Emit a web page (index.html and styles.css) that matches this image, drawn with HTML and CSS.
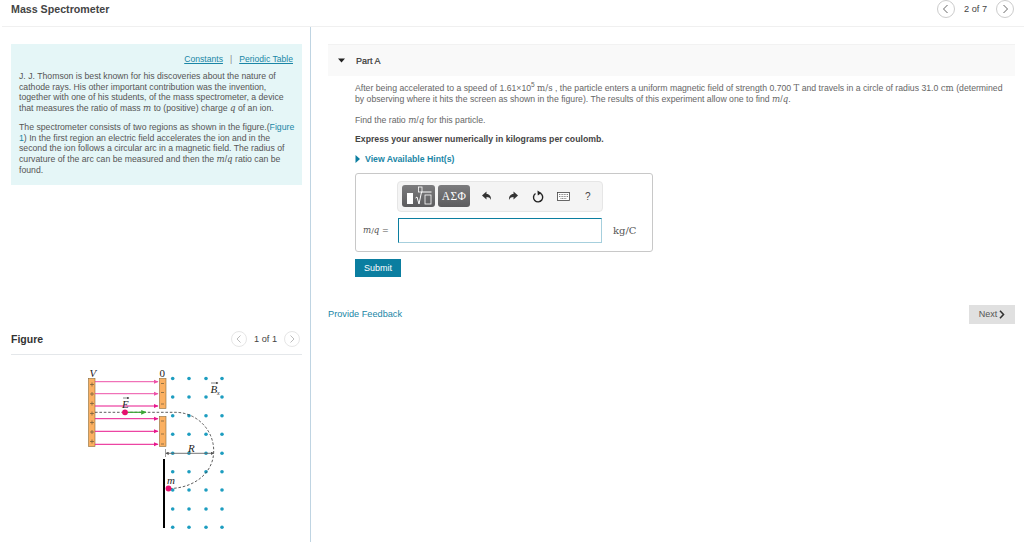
FILE: index.html
```html
<!DOCTYPE html>
<html lang="en">
<head>
<meta charset="utf-8">
<title>Mass Spectrometer</title>
<link rel="stylesheet" href="styles.css">
</head>
<body>
<header class="top">
  <h1 class="title">Mass Spectrometer</h1>
  <div class="pager">
    <span class="circle"><svg width="18" height="18" viewBox="0 0 18 18"><path d="M10.5 5 L6.5 9 L10.5 13" class="chev"/></svg></span>
    <span class="pager-text">2 of 7</span>
    <span class="circle"><svg width="18" height="18" viewBox="0 0 18 18"><path d="M7.5 5 L11.5 9 L7.5 13" class="chev"/></svg></span>
  </div>
</header>
<main class="main">
  <section class="left">
    <div class="intro">
      <div class="links"><a>Constants</a><span class="sep">|</span><a>Periodic Table</a></div>
      <p class="para">J. J. Thomson is best known for his discoveries about the nature of cathode rays. His other important contribution was the invention, together with one of his students, of the mass spectrometer, a device that measures the ratio of mass <i class="m">m</i> to (positive) charge <i class="m">q</i> of an ion.</p>
      <p class="para para2">The spectrometer consists of two regions as shown in the figure.(<span class="fig">Figure 1</span>) In the first region an electric field accelerates the ion and in the second the ion follows a circular arc in a magnetic field. The radius of curvature of the arc can be measured and then the <i class="m">m</i>/<i class="m">q</i> ratio can be found.</p>
    </div>
    <div class="fighead">
      <h2 class="figtitle">Figure</h2>
      <div class="pager small">
        <span class="circle faint"><svg width="16" height="16" viewBox="0 0 16 16"><path d="M9.5 4.5 L6 8 L9.5 11.5" class="chev pale"/></svg></span>
        <span class="pager-text">1 of 1</span>
        <span class="circle faint"><svg width="16" height="16" viewBox="0 0 16 16"><path d="M6.5 4.5 L10 8 L6.5 11.5" class="chev pale"/></svg></span>
      </div>
    </div>
    <svg class="diagram" width="180" height="182" viewBox="0 0 180 182">
      <defs>
        <marker id="ah" markerWidth="5" markerHeight="5" refX="4" refY="2.5" orient="auto"><path d="M0 .5 L4.5 2.5 L0 4.5z" fill="#e8178c"/></marker>
        <marker id="ag" markerWidth="5" markerHeight="5" refX="4" refY="2.5" orient="auto"><path d="M0 .5 L4.5 2.5 L0 4.5z" fill="#3aa535"/></marker>
        <marker id="ak" markerWidth="4" markerHeight="4" refX="3" refY="2" orient="auto-start-reverse"><path d="M0 0 L3.5 2 L0 4z" fill="#555"/></marker>
        <marker id="as" markerWidth="4" markerHeight="4" refX="3" refY="2" orient="auto"><path d="M0 0 L3.5 2 L0 4z" fill="#333"/></marker>
      </defs>
      <g fill="#fbb061" stroke="#8a6d3b" stroke-width=".6">
        <rect x="28.500" y="18.500" width="6.500" height="68"/>
        <rect x="99.500" y="18.500" width="6.500" height="30"/>
        <rect x="99.500" y="56.500" width="6.500" height="30"/>
      </g>
      <g stroke="#e8178c" stroke-width="1">
        <line x1="35" y1="21.700" x2="98" y2="21.700" opacity=".75" marker-end="url(#ah)"/>
        <line x1="35" y1="33.700" x2="98" y2="33.700" opacity=".75" marker-end="url(#ah)"/>
        <line x1="35" y1="46" x2="98" y2="46" marker-end="url(#ah)"/>
        <line x1="35" y1="58.700" x2="98" y2="58.700" marker-end="url(#ah)"/>
        <line x1="35" y1="71.300" x2="98" y2="71.300" marker-end="url(#ah)"/>
        <line x1="35" y1="84.300" x2="98" y2="84.300" marker-end="url(#ah)"/>
      </g>
      <g stroke="#6b5a3a" stroke-width=".7">
        <path d="M30 24.500h4M32 22.500v4M30 34h4M32 32v4M30 43.500h4M32 41.500v4M30 53.500h4M32 51.500v4M30 62.500h4M32 60.500v4M30 72h4M32 70v4M30 81.500h4M32 79.500v4"/>
        <path d="M101 23.500h3M101 32.500h3M101 44h3M101 61h3M101 74h3M101 84h3"/>
      </g>
      <g fill="#1d9dc0">
        <circle cx="112.700" cy="18.500" r="1.800"/><circle cx="129" cy="18.500" r="1.800"/><circle cx="146" cy="18.500" r="1.800"/><circle cx="162" cy="18.500" r="1.800"/>
        <circle cx="112.700" cy="37" r="1.800"/><circle cx="129" cy="37" r="1.800"/><circle cx="146" cy="37" r="1.800"/><circle cx="162" cy="37" r="1.800"/>
        <circle cx="112.700" cy="55.700" r="1.800"/><circle cx="129" cy="55.700" r="1.800"/><circle cx="146" cy="55.700" r="1.800"/><circle cx="162" cy="55.700" r="1.800"/>
        <circle cx="112.700" cy="74.300" r="1.800"/><circle cx="129" cy="74.300" r="1.800"/><circle cx="146" cy="74.300" r="1.800"/><circle cx="162" cy="74.300" r="1.800"/>
        <circle cx="112.700" cy="93.300" r="1.800"/><circle cx="129" cy="93.300" r="1.800"/><circle cx="146" cy="93.300" r="1.800"/><circle cx="162" cy="93.300" r="1.800"/>
        <circle cx="112.700" cy="111.700" r="1.800"/><circle cx="129" cy="111.700" r="1.800"/><circle cx="146" cy="111.700" r="1.800"/><circle cx="162" cy="111.700" r="1.800"/>
        <circle cx="112.700" cy="130" r="1.800"/><circle cx="129" cy="130" r="1.800"/><circle cx="146" cy="130" r="1.800"/><circle cx="162" cy="130" r="1.800"/>
        <circle cx="112.700" cy="149" r="1.800"/><circle cx="129" cy="149" r="1.800"/><circle cx="146" cy="149" r="1.800"/><circle cx="162" cy="149" r="1.800"/>
        <circle cx="112.700" cy="167.300" r="1.800"/><circle cx="129" cy="167.300" r="1.800"/><circle cx="146" cy="167.300" r="1.800"/><circle cx="162" cy="167.300" r="1.800"/>
      </g>
      <path d="M35 52.300 H115 A38.500 38.500 0 0 1 153.700 91 C153.700 113 134 128 110 128.500" fill="none" stroke="#333" stroke-width=".8" stroke-dasharray="2.600 1.800"/>
      <line x1="68" y1="52.300" x2="86" y2="52.300" stroke="#3aa535" stroke-width="1.200" marker-end="url(#ag)"/>
      <circle cx="65" cy="52.300" r="2.900" fill="#e5116f"/>
      <rect x="103" y="99" width="2" height="69" fill="#000"/>
      <circle cx="108.500" cy="128.500" r="2.900" fill="#e5116f"/>
      <path d="M105.500 89v8" stroke="#777" stroke-width=".7"/>
      <line x1="106" y1="93.300" x2="153.500" y2="93.300" stroke="#666" stroke-width=".9" marker-end="url(#ak)" marker-start="url(#ak)"/>
      <g class="dtext">
        <text x="29.500" y="17">V</text>
        <text x="99.500" y="17" class="up">0</text>
        <text x="62" y="48">E</text>
        <text x="150.500" y="33">B</text>
        <text x="157" y="35" class="sub">x</text>
        <text x="128" y="91.500">R</text>
        <text x="107" y="124">m</text>
      </g>
      <line x1="63" y1="38" x2="69" y2="38" stroke="#333" stroke-width=".6" marker-end="url(#as)"/>
      <line x1="151" y1="23" x2="158" y2="23" stroke="#333" stroke-width=".6" marker-end="url(#as)"/>
    </svg>
  </section>
  <section class="right">
    <div class="part"><svg class="tri" width="8" height="5" viewBox="0 0 8 5"><path d="M0 0.500H7L3.500 4.500z" fill="#222"/></svg><span>Part A</span></div>
    <div class="body">
      <p class="q q1">After being accelerated to a speed of 1.61&#215;10<sup>5</sup> <span class="u">m/s</span> , the particle enters a uniform magnetic field of strength 0.700 <span class="u">T</span> and travels in a circle of radius 31.0 <span class="u">cm</span> (determined by observing where it hits the screen as shown in the figure). The results of this experiment allow one to find <i class="m">m</i>/<i class="m">q</i>.</p>
      <p class="q q2">Find the ratio <i class="m">m</i>/<i class="m">q</i> for this particle.</p>
      <p class="q bold">Express your answer numerically in kilograms per coulomb.</p>
      <div class="hint"><svg width="6" height="8" viewBox="0 0 6 8"><path d="M0.500 0V8L5 4z" fill="#0b7ea0"/></svg><span>View Available Hint(s)</span></div>
      <div class="answer">
        <div class="toolbar">
          <span class="tbtn tpl"><svg width="32" height="22" viewBox="0 0 32 22"><rect x="4" y="8" width="6" height="11" fill="#fff"/><rect x="15.500" y="2" width="3.500" height="5" fill="none" stroke="#fff" stroke-width=".8"/><path d="M12.500 13l1.500-1 2 7 2.500-12h10" fill="none" stroke="#fff" stroke-width="1"/><rect x="22" y="10" width="6" height="9" fill="none" stroke="#fff" stroke-width=".8"/></svg></span>
          <span class="tbtn sym">&#913;&#931;&#934;</span>
          <svg class="ti ti1" width="12" height="12" viewBox="0 0 12 12"><path d="M5.500 1.500L1 5.500l4.500 4V7c2 0 3.500.6 4.500 3 .3-3.600-1.500-6-4.500-6z" fill="#333"/></svg>
          <svg class="ti ti2" width="12" height="12" viewBox="0 0 12 12"><path d="M6.500 1.500L11 5.500l-4.500 4V7c-2 0-3.500.6-4.500 3C1.700 6.400 3.500 4 6.500 4z" fill="#333"/></svg>
          <svg class="ti ti3" width="12" height="13" viewBox="0 0 12 13"><path d="M8.200 3.200A4.600 4.600 0 1 1 3.500 3.500" fill="none" stroke="#222" stroke-width="1.400"/><path d="M5.500 0.500L9.500 3 5.800 5.500z" fill="#222"/></svg>
          <svg class="ti ti4" width="13" height="9" viewBox="0 0 13 9"><rect x=".5" y=".5" width="12" height="8" fill="#fff" stroke="#444" stroke-width=".8"/><path d="M2 2.500h9M2 4.500h9M3.500 6.500h6" stroke="#666" stroke-width=".8" stroke-dasharray="1 .6"/></svg>
          <span class="help">?</span>
        </div>
        <div class="ansrow">
          <span class="lab"><i class="m">m</i>/<i class="m">q</i> =</span>
          <span class="field"></span>
          <span class="unit">kg/C</span>
        </div>
      </div>
      <span class="submit">Submit</span>
    </div>
    <div class="foot">
      <a class="feedback">Provide Feedback</a>
      <span class="next">Next <svg width="6" height="9" viewBox="0 0 6 9"><path d="M1 .8L4.500 4.500 1 8.200" fill="none" stroke="#333" stroke-width="1.600"/></svg></span>
    </div>
  </section>
</main>
</body>
</html>
```
FILE: styles.css
```css
* { box-sizing: border-box; }
html, body { margin: 0; padding: 0; }
body {
  width: 1024px;
  height: 542px;
  overflow: hidden;
  background: #fff;
  font-family: "Liberation Sans", Arial, sans-serif;
  color: #555;
}
a { color: #1a86a6; }
.top {
  height: 27px;
  display: flex;
  align-items: center;
  justify-content: space-between;
  padding: 0 10px 9px 9px;
  border-bottom: 1px solid #f0f0f0;
  margin: 0 0 0 2px;
}
.title { margin: 0; font-size: 10.67px; font-weight: bold; color: #444; }
.pager { display: flex; align-items: center; gap: 9px; }
.pager-text { font-size: 9.2px; color: #444; }
.circle {
  width: 18px;
  height: 18px;
  border: 1px solid #ccc;
  border-radius: 50%;
  display: flex;
  align-items: center;
  justify-content: center;
  background: #fff;
}
.circle svg { flex: none; }
.chev { fill: none; stroke: #666; stroke-width: 1; }
.pale { stroke: #bbb; }
.faint { width: 16px; height: 16px; border-color: #e6e6e6; }
.small { gap: 7px; padding-right: 2px; }
.main { display: flex; height: 515px; }
.left {
  width: 311px;
  flex: none;
  border-right: 1px solid #bfd4e2;
  padding: 17px 8px 0 11px;
}
.intro {
  background: #e5f6f7;
  height: 141px;
  padding: 9px 6px 0 8px;
  font-size: 8.7px;
  line-height: 10.7px;
  color: #555;
}
.links { text-align: right; font-size: 8.6px; line-height: 12px; margin-bottom: 6px; padding-right: 3px; }
.links a { text-decoration: underline; }
.sep { margin: 0 7px; color: #888; }
.para { margin: 0; }
.para2 { margin-top: 8px; }
.fig { color: #1a86a6; }
.m { font-family: "DejaVu Serif", serif; font-style: italic; font-size: 8.6px; line-height: 0; }
.fighead {
  margin-top: 143px;
  display: flex;
  align-items: center;
  justify-content: space-between;
  height: 27px;
  padding-bottom: 5px;
  border-bottom: 1px solid #e4e7ea;
}
.figtitle { margin: 0; font-size: 10.5px; font-weight: bold; color: #333; }
.diagram { display: block; margin: 5px 0 0 49px; }
.dtext text { font-family: "Liberation Serif", serif; font-style: italic; font-size: 11px; fill: #222; }
.dtext .up { font-style: normal; }
.dtext .sub { font-size: 6px; }
.right { flex: 1; padding: 17px 9px 0 17px; min-width: 0; }
.part {
  height: 32px;
  background: #f9f9f9;
  border-top: 1px solid #f2f2f2;
  display: flex;
  align-items: center;
  padding-left: 10px;
  gap: 10px;
  font-size: 9px;
  color: #333;
  font-weight: normal;
}
.part span { -webkit-text-stroke: .2px #333; }
.tri { flex: none; }
.body { padding: 7px 0 0 27px; }
.q { margin: 0; font-size: 8.7px; line-height: 10.7px; color: #666; }
.q1 { width: 655px; }
.q1 sup { font-size: 6.500px; line-height: 0; }
.q2 { margin-top: 11px; }
.u { font-family: "DejaVu Serif", serif; font-size: 8.6px; line-height: 0; }
.bold { margin-top: 8px; font-weight: bold; color: #444; font-size: 8.7px; }
.hint {
  margin-top: 9px;
  display: flex;
  align-items: center;
  gap: 4px;
  font-size: 8.7px;
  font-weight: bold;
  color: #1a86a6;
  line-height: 11px;
}
.answer {
  margin-top: 8px;
  width: 298px;
  height: 79px;
  border: 1px solid #c8c8c8;
  border-radius: 3px;
  padding: 7px 0 0 41px;
  position: relative;
}
.toolbar {
  width: 206px;
  height: 31px;
  background: #f4f4f4;
  border: 1px solid #e6e6e6;
  border-radius: 4px;
  display: flex;
  align-items: center;
  padding-left: 4px;
}
.tbtn {
  height: 22px;
  background: linear-gradient(#7c7c7e, #5c5c5e);
  border-radius: 3px;
  display: flex;
  align-items: center;
  justify-content: center;
  color: #fff;
}
.tpl { width: 33px; margin-right: 3px; }
.tpl svg { flex: none; }
.sym { width: 32px; font-family: "Liberation Serif", serif; font-size: 11.500px; letter-spacing: .3px; }
.ti { flex: none; }
.ti1 { margin-left: 11px; }
.ti2 { margin-left: 14px; }
.ti3 { margin-left: 13px; }
.ti4 { margin-left: 13px; }
.help { margin-left: 15px; font-size: 10px; color: #444; }
.ansrow { display: flex; align-items: center; margin: 6px 0 0 -34px; height: 25px; }
.lab { width: 35px; font-family: "DejaVu Serif", serif; font-size: 8px; color: #555; }
.field {
  width: 204px;
  height: 25px;
  border: 1px solid #a6cfdd;
  border-top-color: #0b7ea0;
  border-left-color: #0b7ea0;
  background: #fff;
  flex: none;
}
.unit { margin-left: 11px; font-family: "DejaVu Serif", serif; font-size: 10px; color: #555; }
.submit {
  display: block;
  margin-top: 7px;
  width: 46px;
  height: 18px;
  background: #0b7ea0;
  color: #fff;
  font-size: 9px;
  line-height: 18px;
  text-align: center;
}
.foot {
  margin-top: 28px;
  display: flex;
  align-items: center;
  justify-content: space-between;
  height: 19px;
}
.feedback { font-size: 9.2px; }
.next {
  width: 46px;
  height: 19px;
  background: #e0e0e0;
  font-size: 9px;
  color: #555;
  display: flex;
  align-items: center;
  justify-content: center;
  gap: 2px;
}
```
